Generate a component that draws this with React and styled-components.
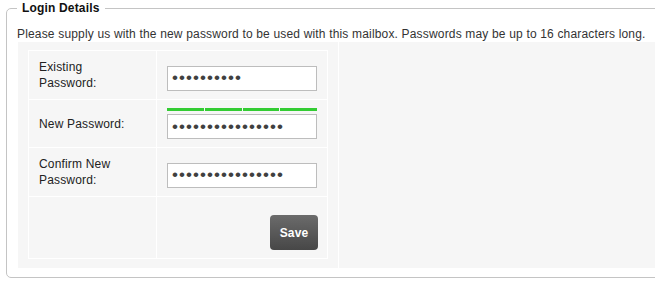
import styled, { createGlobalStyle } from 'styled-components';

const GlobalStyle = createGlobalStyle`
  html, body {
    margin: 0;
    padding: 0;
    overflow: hidden;
    background: #fff;
  }
  body {
    font-family: "Liberation Sans", Arial, sans-serif;
    font-size: 12px;
    letter-spacing: 0.17px;
    color: #222;
  }
`;

const Fieldset = styled.fieldset`
  box-sizing: border-box;
  width: 720px;
  margin: 1px 0 0 6px;
  padding: 0 0 9px 10px;
  border: 1px solid #c4c4c4;
  border-radius: 5px;
`;

const Legend = styled.legend`
  padding: 0 5px;
  font-weight: bold;
  line-height: 14px;
  color: #111;
`;

const Intro = styled.p`
  margin: 11px 0 0;
  line-height: 16px;
  color: #333;
  white-space: nowrap;
`;

const Panel = styled.div`
  display: grid;
  grid-template-columns: 320px 1fr;
  column-gap: 1px;
  background: #fff;
  margin-left: 1px;
`;

const PanelCell = styled.div`
  background: #f6f6f6;
  padding: ${(p) => (p.$pad ? '8px 10px 9px' : '0')};
`;

const FormGrid = styled.div`
  display: grid;
  grid-template-columns: 127px 170px;
  grid-template-rows: 48px 47px 48px 61px;
  gap: 1px;
  padding: 1px;
  background: #fff;
`;

const LabelCell = styled.div`
  display: flex;
  align-items: center;
  padding: 0 10px;
  background: #f6f6f6;
  line-height: 16px;
  color: #222;
`;

const LabelText = styled.label`
  max-width: 92px;
`;

const FieldCell = styled.div`
  display: flex;
  flex-direction: column;
  justify-content: center;
  padding: 0 10px;
  background: #f6f6f6;
`;

const ButtonCell = styled.div`
  display: flex;
  justify-content: flex-end;
  align-items: flex-start;
  padding: 18px 9px 0 10px;
  background: #f6f6f6;
`;

const Meter = styled.div`
  display: flex;
  gap: 1px;
  width: 150px;
  height: 3px;
  margin-bottom: 3px;
  visibility: ${(p) => (p.$show ? 'visible' : 'hidden')};
`;

const MeterBar = styled.span`
  flex: 1;
  background: #33cc33;
`;

const PasswordInput = styled.input`
  box-sizing: border-box;
  width: 150px;
  height: 25px;
  margin: 0;
  padding: 0 4px;
  border: 1px solid #bdbdbd;
  background: #fff;
  font-family: "Liberation Sans", Arial, sans-serif;
  font-size: 17px;
  letter-spacing: 1.05px;
  color: #404040;
  outline: none;
`;

const SaveButton = styled.button`
  width: 48px;
  height: 35px;
  padding: 0;
  border: none;
  border-radius: 4px;
  background: linear-gradient(to bottom, #6b6b6b, #474747);
  color: #fff;
  font-family: "Liberation Sans", Arial, sans-serif;
  font-size: 12px;
  font-weight: bold;
  letter-spacing: 0.17px;
  cursor: pointer;
`;

const fields = [
  { id: 'existing', label: 'Existing Password:', value: 'abcdefghij', meter: false },
  { id: 'new', label: 'New Password:', value: 'abcdefghijklmnop', meter: true },
  { id: 'confirm', label: 'Confirm New Password:', value: 'abcdefghijklmnop', meter: false },
];

export default function App() {
  return (
    <>
      <GlobalStyle />
      <Fieldset>
        <Legend>Login Details</Legend>
        <Intro>
          Please supply us with the new password to be used with this mailbox. Passwords may be up to
          16 characters long.
        </Intro>
        <Panel>
          <PanelCell $pad>
            <FormGrid>
              {fields.map((f) => (
                <FieldRow key={f.id} field={f} />
              ))}
              <LabelCell />
              <ButtonCell>
                <SaveButton type="button">Save</SaveButton>
              </ButtonCell>
            </FormGrid>
          </PanelCell>
          <PanelCell />
        </Panel>
      </Fieldset>
    </>
  );
}

function FieldRow({ field }) {
  return (
    <>
      <LabelCell>
        <LabelText htmlFor={field.id}>{field.label}</LabelText>
      </LabelCell>
      <FieldCell>
        <Meter $show={field.meter}>
          <MeterBar />
          <MeterBar />
          <MeterBar />
          <MeterBar />
        </Meter>
        <PasswordInput id={field.id} type="password" defaultValue={field.value} readOnly />
      </FieldCell>
    </>
  );
}
